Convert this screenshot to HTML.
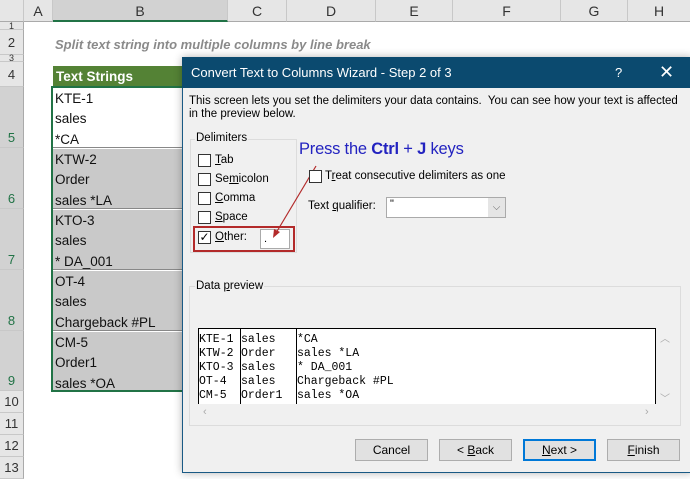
<!DOCTYPE html><html><head><style>
*{margin:0;padding:0;box-sizing:border-box}
body{width:690px;height:471px;overflow:hidden;background:#fff;font-family:"Liberation Sans",sans-serif;position:relative}
.a{position:absolute}
.ch{top:0;height:22px;background:#e6e6e6;border-right:1px solid #c8c8c8;border-bottom:1px solid #aaa;font-size:14px;color:#333;text-align:center;line-height:22px}
.rh{left:0;width:24px;background:#e6e6e6;border-bottom:1px solid #c8c8c8;border-right:1px solid #aaa;font-size:13px;color:#333;text-align:center}
.cell{left:53px;width:175px;background:#c9c9c9;font-size:13.5px;color:#111;padding-left:2px;border-bottom:1px solid #888}
.cell div{height:20.3px;line-height:21px}
.cb{width:13px;height:13px;border:1px solid #333;background:#fff}
.lbl{font-size:11.5px;color:#000}
.btn{top:439px;width:73px;height:22px;border:1px solid #adadad;background:#e1e1e1;font-size:12px;text-align:center;line-height:20px}
pre{font-family:"Liberation Mono",monospace;font-size:11.5px;line-height:14px}
</style></head><body>
<div class="a ch" style="left:0;width:24px;background:#e6e6e6"></div>
<div class="a ch" style="left:24px;width:29px">A</div>
<div class="a ch" style="left:53px;width:175px;background:#d2d2d2;border-bottom:2px solid #217346">B</div>
<div class="a ch" style="left:228px;width:59px">C</div>
<div class="a ch" style="left:287px;width:89px">D</div>
<div class="a ch" style="left:376px;width:77px">E</div>
<div class="a ch" style="left:453px;width:108px">F</div>
<div class="a ch" style="left:561px;width:67px">G</div>
<div class="a ch" style="left:628px;width:62px;border-right:0">H</div>
<div class="a rh" style="top:22px;height:8px;line-height:8px;font-size:9px">1</div>
<div class="a rh" style="top:30px;height:25px;line-height:25px">2</div>
<div class="a rh" style="top:55px;height:7px;line-height:7px;font-size:9px">3</div>
<div class="a rh" style="top:62px;height:25px;line-height:25px">4</div>
<div class="a rh" style="top:87px;height:61px;line-height:102px;background:#d2d2d2;color:#217346">5</div>
<div class="a rh" style="top:148px;height:61px;line-height:102px;background:#d2d2d2;color:#217346">6</div>
<div class="a rh" style="top:209px;height:61px;line-height:102px;background:#d2d2d2;color:#217346">7</div>
<div class="a rh" style="top:270px;height:61px;line-height:102px;background:#d2d2d2;color:#217346">8</div>
<div class="a rh" style="top:331px;height:60px;line-height:100px;background:#d2d2d2;color:#217346">9</div>
<div class="a rh" style="top:391px;height:22px;line-height:22px">10</div>
<div class="a rh" style="top:413px;height:22px;line-height:22px">11</div>
<div class="a rh" style="top:435px;height:22px;line-height:22px">12</div>
<div class="a rh" style="top:457px;height:22px;line-height:22px">13</div>
<div class="a" style="left:55px;top:37px;font-size:13px;font-style:italic;font-weight:bold;color:#8a8a8a">Split text string into multiple columns by line break</div>
<div class="a" style="left:53px;top:66px;width:175px;height:21px;background:#548235;color:#fff;font-weight:bold;font-size:13.5px;padding:3px 3px">Text Strings</div>
<div class="a" style="left:51px;top:86px;width:179px;height:306px;border:2px solid #217346"></div>
<div class="a cell" style="top:88px;height:60px;background:#fff"><div>KTE-1</div><div>sales</div><div>*CA</div></div>
<div class="a cell" style="top:149px;height:60px"><div>KTW-2</div><div>Order</div><div>sales *LA</div></div>
<div class="a cell" style="top:210px;height:60px"><div>KTO-3</div><div>sales</div><div>* DA_001</div></div>
<div class="a cell" style="top:271px;height:60px"><div>OT-4</div><div>sales</div><div>Chargeback #PL</div></div>
<div class="a cell" style="top:332px;height:58px;border:0"><div>CM-5</div><div>Order1</div><div>sales *OA</div></div>

<div class="a" style="left:182px;top:57px;width:510px;height:416px;background:#f0f0f0;border:1px solid #1a5a85;box-shadow:0 0 8px rgba(0,0,0,.3)"></div>
<div class="a" style="left:182px;top:57px;width:508px;height:31px;background:#0b4a6f;color:#fff;font-size:13px;line-height:31px;padding-left:9px">Convert Text to Columns Wizard - Step 2 of 3
<span class="a" style="left:433px;top:0">?</span><span class="a" style="left:477px;top:0;font-size:18px">✕</span></div>
<div class="a lbl" style="left:189px;top:95px;width:495px;line-height:13px">This screen lets you set the delimiters your data contains.&nbsp; You can see how your text is affected in the preview below.</div>
<div class="a" style="left:190px;top:139px;width:107px;height:114px;border:1px solid #dcdcdc"></div>
<div class="a lbl" style="left:195px;top:132px;background:#f0f0f0;padding:0 1px">Delimiters</div>
<div class="a cb" style="left:198px;top:154px"></div><div class="a lbl" style="left:215px;top:154px"><u>T</u>ab</div>
<div class="a cb" style="left:198px;top:173px"></div><div class="a lbl" style="left:215px;top:173px">Se<u>m</u>icolon</div>
<div class="a cb" style="left:198px;top:192px"></div><div class="a lbl" style="left:215px;top:192px"><u>C</u>omma</div>
<div class="a cb" style="left:198px;top:211px"></div><div class="a lbl" style="left:215px;top:211px"><u>S</u>pace</div>
<div class="a" style="left:193px;top:226px;width:102px;height:26px;border:2px solid #b32a2a"></div>
<div class="a cb" style="left:198px;top:231px;font-size:12px;line-height:10px;text-align:center">✓</div><div class="a lbl" style="left:215px;top:231px"><u>O</u>ther:</div>
<div class="a" style="left:260px;top:229px;width:30px;height:20px;background:#fff;border:1px solid #aaa;font-size:11px;padding-left:3px;line-height:18px">.</div>
<div class="a" style="left:299px;top:140px;font-size:16.5px;color:#2323c0;letter-spacing:-0.2px">Press the <b>Ctrl</b> + <b>J</b> keys</div>
<svg class="a" style="left:0;top:0" width="690" height="471"><line x1="316" y1="166" x2="276" y2="233" stroke="#b32a2a" stroke-width="1.2"/><polygon points="273,238 274,229 280,232" fill="#b32a2a"/></svg>
<div class="a cb" style="left:309px;top:170px"></div><div class="a lbl" style="left:325px;top:170px">T<u>r</u>eat consecutive delimiters as one</div>
<div class="a lbl" style="left:308px;top:200px">Text <u>q</u>ualifier:</div>
<div class="a" style="left:386px;top:197px;width:120px;height:21px;background:#fff;border:1px solid #aaa;font-size:11px;padding-left:3px">"</div>
<div class="a" style="left:488px;top:198px;width:17px;height:19px;background:#e5e5e5;color:#666;font-size:10px;text-align:center;line-height:19px">⌵</div>
<div class="a" style="left:189px;top:286px;width:492px;height:140px;border:1px solid #dcdcdc"></div>
<div class="a lbl" style="left:195px;top:280px;background:#f0f0f0;padding:0 1px">Data <u>p</u>review</div>
<div class="a" style="left:198px;top:328px;width:458px;height:76px;background:#fff;border:1px solid #000;border-bottom:0;overflow:hidden">
<div class="a" style="left:41px;top:0;width:1px;height:76px;background:#000"></div>
<div class="a" style="left:97px;top:0;width:1px;height:76px;background:#000"></div>
<pre class="a" style="left:0;top:4px">KTE-1
KTW-2
KTO-3
OT-4
CM-5</pre>
<pre class="a" style="left:42px;top:4px">sales
Order
sales
sales
Order1</pre>
<pre class="a" style="left:98px;top:4px">*CA
sales *LA
* DA_001
Chargeback #PL
sales *OA</pre></div>
<div class="a" style="left:660px;top:330px;color:#aaa;font-size:10px">︿</div>
<div class="a" style="left:660px;top:390px;color:#aaa;font-size:10px">﹀</div>
<div class="a" style="left:203px;top:406px;color:#aaa;font-size:11px">‹</div>
<div class="a" style="left:645px;top:406px;color:#aaa;font-size:11px">›</div>
<div class="a btn" style="left:355px">Cancel</div>
<div class="a btn" style="left:439px">&lt; <u>B</u>ack</div>
<div class="a btn" style="left:523px;border:2px solid #0078d7;line-height:18px"><u>N</u>ext &gt;</div>
<div class="a btn" style="left:607px"><u>F</u>inish</div>
</body></html>
